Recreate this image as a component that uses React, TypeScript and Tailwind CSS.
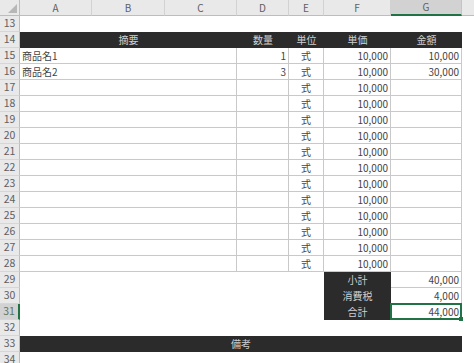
import React from "react";

const grid = "grid grid-cols-[20px_72px_73px_72px_52px_35px_67px_71px_12px] auto-rows-[16px]";
const font = "font-['Noto_Sans_CJK_JP',sans-serif]";

const colLetters = ["A", "B", "C", "D", "E", "F", "G"];

type ItemRow = { name: string; qty: string; price: string; amount: string };

const items: ItemRow[] = [
  { name: "商品名1", qty: "1", price: "10,000", amount: "10,000" },
  { name: "商品名2", qty: "3", price: "10,000", amount: "30,000" },
  ...Array.from({ length: 12 }, () => ({ name: "", qty: "", price: "10,000", amount: "" })),
];

const totals = [
  { label: "小計", value: "40,000" },
  { label: "消費税", value: "4,000" },
  { label: "合計", value: "44,000" },
];

function RowHead({ n, active }: { n: number; active?: boolean }) {
  return (
    <div
      className={
        "flex items-center justify-center border-b border-[#d6d6d6] text-[10.5px] leading-none " +
        (active
          ? "bg-[#d2d2d2] text-[#5a7565] border-r-2 border-r-[#217346]"
          : "bg-[#e9e9e9] text-[#606060] border-r border-r-[#bdbdbd]")
      }
    >
      {n}
    </div>
  );
}

const cell = "flex items-center border-r border-b border-[#c9c9c9] text-[10px] leading-none text-[#444] px-[2px]";
const dark = "flex items-center justify-center bg-[#2b2b2b] text-[#cfcfcf] text-[10px] leading-none";

export default function App() {
  return (
    <div className={`w-[474px] h-[363px] overflow-hidden bg-white ${font}`}>
      <div className={grid}>
        {/* column header row */}
        <div className="relative bg-[#e9e9e9] border-r border-b border-[#bdbdbd]">
          <svg className="absolute right-[2px] bottom-[2px]" width="9" height="9" viewBox="0 0 9 9">
            <polygon points="9,0 9,9 0,9" fill="#b7b7b7" />
          </svg>
        </div>
        {colLetters.map((c) =>
          c === "G" ? (
            <div
              key={c}
              className="flex items-center justify-center bg-[#d2d2d2] border-r border-[#c4c4c4] border-b-2 border-b-[#217346] text-[10px] leading-none text-[#606060]"
            >
              {c}
            </div>
          ) : (
            <div
              key={c}
              className="flex items-center justify-center bg-[#e9e9e9] border-r border-[#d2d2d2] border-b border-b-[#bdbdbd] text-[10px] leading-none text-[#606060]"
            >
              {c}
            </div>
          )
        )}
        <div className="bg-[#e9e9e9] border-b border-[#bdbdbd]" />

        {/* 13 */}
        <RowHead n={13} />
        <div className="col-span-8" />

        {/* 14 header */}
        <RowHead n={14} />
        <div className={`${dark} col-span-3`}>摘要</div>
        <div className={dark}>数量</div>
        <div className={dark}>単位</div>
        <div className={dark}>単価</div>
        <div className={dark}>金額</div>
        <div />

        {/* 15 - 28 items */}
        {items.map((it, i) => (
          <React.Fragment key={i}>
            <RowHead n={15 + i} />
            <div className={`${cell} col-span-3`}>{it.name}</div>
            <div className={`${cell} justify-end`}>{it.qty}</div>
            <div className={`${cell} justify-center`}>式</div>
            <div className={`${cell} justify-end`}>{it.price}</div>
            <div className={`${cell} justify-end`}>{it.amount}</div>
            <div />
          </React.Fragment>
        ))}

        {/* 29 - 31 totals */}
        {totals.map((t, i) => (
          <React.Fragment key={t.label}>
            <RowHead n={29 + i} active={i === 2} />
            <div className="col-span-5" />
            <div className={dark}>{t.label}</div>
            <div className={`${cell} justify-end relative`}>
              {t.value}
              {i === 2 && (
                <>
                  <div className="absolute -left-px -top-px -right-px -bottom-px border-2 border-[#217346]" />
                  <div className="absolute -right-[2px] -bottom-[2px] w-[4px] h-[4px] bg-[#217346]" />
                </>
              )}
            </div>
            <div />
          </React.Fragment>
        ))}

        {/* 32 */}
        <RowHead n={32} />
        <div className="col-span-8" />

        {/* 33 notes */}
        <RowHead n={33} />
        <div className={`${dark} col-span-7`}>備考</div>
        <div />

        {/* 34 */}
        <RowHead n={34} />
        <div className="col-span-8" />
      </div>
    </div>
  );
}
